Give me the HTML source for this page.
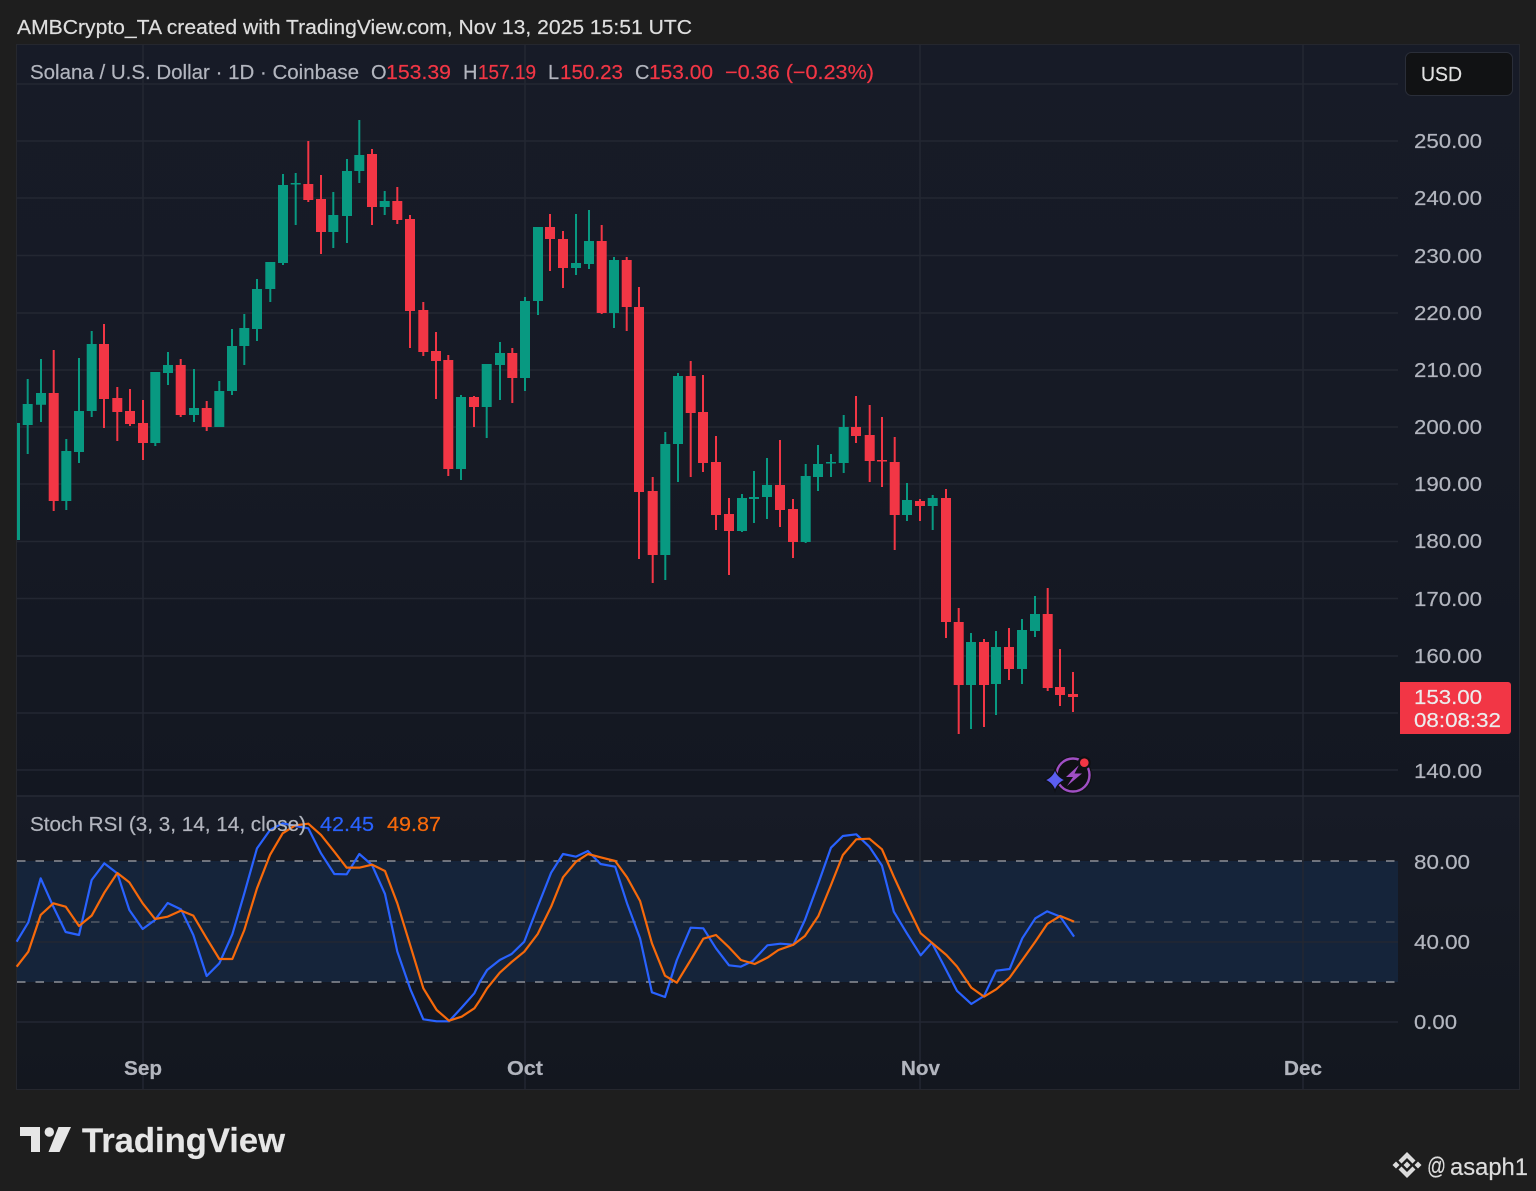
<!DOCTYPE html>
<html><head><meta charset="utf-8"><title>SOL chart</title>
<style>
html,body{margin:0;padding:0;background:#1e1e1e;width:1536px;height:1191px;overflow:hidden}
svg{display:block}
text{font-family:"Liberation Sans",sans-serif;stroke:currentColor;stroke-width:.2px}
</style></head>
<body>
<svg width="1536" height="1191" viewBox="0 0 1536 1191" xmlns="http://www.w3.org/2000/svg">
<defs>
<linearGradient id="a" x1="0" y1="0" x2="0" y2="1"><stop offset="0" stop-color="#171b27"/><stop offset=".5" stop-color="#161a25"/><stop offset="1" stop-color="#131721"/></linearGradient>
<linearGradient id="b" x1="0" y1="0" x2="0" y2="1"><stop offset="0" stop-color="#171b26"/><stop offset="1" stop-color="#13171f"/></linearGradient>
</defs>
<rect width="1536" height="1191" fill="#1e1e1e"/>
<rect x="17" y="45" width="1502" height="751" fill="url(#a)"/>
<rect x="17" y="796" width="1502" height="293" fill="url(#b)"/>
<rect x="16.500" y="44.500" width="1503" height="1045" fill="none" stroke="#25272e" stroke-width="1"/>

<!-- band -->
<rect x="17" y="861" width="1381" height="121" fill="#15243a"/>

<!-- grid -->
<path d="M17 84H1398M17 141H1398M17 198H1398M17 255.500H1398M17 313H1398M17 370H1398M17 427H1398M17 484H1398M17 541.500H1398M17 598.500H1398M17 656H1398M17 713H1398M17 770H1398M17 942H1398M17 1022H1398M143 45V1089M525 45V1089M920 45V1089M1303 45V1089" stroke="#232732" stroke-width="1.500" fill="none"/>
<path d="M17 796H1519" stroke="#262a35" stroke-width="1.500"/>

<path d="M17 861H1398M17 982H1398" stroke="#8d9097" stroke-width="1.500" stroke-dasharray="8.500 10"/>
<path d="M17 922H1398" stroke="#5f646d" stroke-width="1.200" stroke-dasharray="8.500 10"/>

<!-- green wicks -->
<path fill="none" stroke="#089981" stroke-width="2" d="M27.700 379V454M41 359V422M66.300 439V510M79 358V463M91.700 331V417M155.300 372V446M168 352V385M194 369V422M219.300 381V427M232 329V395M244.300 314V365M257 279V341M270.300 262V302M283 174V265M295.700 173V225M333.300 192V248M347 159V243M359.300 120V183M384.700 191V215M461 395V480M486.700 364V438M500 342V400M525 297V391M538 227V315M576 214V275M589 210V269M614 257V328M665.300 432V580M678 373V482M742 494V532M754 471V523M767 458V519M805.700 464V543M818 445V491M831 454V477M843.700 415V473M907 483V521M932.700 495V530M971 633V729M996 631V715M1022 619V684M1035 596V637"/>
<!-- green bodies -->
<path fill="none" stroke="#089981" stroke-width="10" d="M27.700 404V425M41 393V404.700M66.300 451V501M79 411V452M91.700 344V411M155.300 372V443M168 365V373M194 408V415M219.300 391V427M232 346V391M244.300 328V346M257 289V329M270.300 262V289M283 185V263M333.300 215V232M347 171V216M359.300 155V171M384.700 201V207M461 397V469M486.700 364V407M500 353V365M525 301V378M538 227V301M576 263V268M589 241V264M614 260V313M665.300 444V555M678 376V444M742 498V531M767 485V497M805.700 476V542M818 464V477M843.700 427V463M907 500V515M932.700 498V506M971 642V685M996 647V684M1022 630V669M1035 614V631"/>
<path fill="none" stroke="#089981" stroke-width="10" d="M295.700 183V184.500M754 497V499M831 462V463.500"/>
<path fill="none" stroke="#089981" stroke-width="3" d="M18.500 423V540"/>

<!-- red wicks -->
<path fill="none" stroke="#f23645" stroke-width="2" d="M53.700 350V511M104 324V428M117.300 387V441M130 389V426M143 400V460M180.700 359V417M206.700 401V431M308.300 141V202M321 175V254M372 149V225M397.300 187V224M410 215V348M423.300 302V356M436 332V399M448.300 355V476M474 396V427M512.300 348V403M550 214V271M563 231V288M601.700 225V314M626.700 257V331M639 287V559M652.700 477V583M690.700 361V477M703 375V472M716 436V530M729 498V575M780 440V527M793 499V558M856 396V443M869.700 405V482M882 417V487M894.700 437V550M920 499V521M946 489V638M958.700 608V734M984 639V727M1009 628V680M1047.700 588V691M1060 649V706M1073 672V712"/>
<!-- red bodies -->
<path fill="none" stroke="#f23645" stroke-width="10" d="M53.700 393V501M104 344V399M117.300 398V412M130 411V424M143 423V443M180.700 365V415M206.700 408V427M308.300 184V200M321 199V232M372 154V207M397.300 201V220M410 219V311M423.300 310V352M436 351V361M448.300 360V469M474 397V407M512.300 353V378M550 227V239M563 239V268M601.700 241V313M626.700 260V307M639 307V492M652.700 491V555M690.700 376V413M703 412V463M716 462V515M729 514V531M780 485V510M793 509V542M856 427V436M869.700 435V461M894.700 462V515M920 501V506M946 498V622M958.700 622V685M984 642V685M1009 647V669M1047.700 614V688M1060 687V695M1073 694V697M882 460V461.500"/>

<!-- stoch rsi left part -->
<g transform="scale(.33333)" fill="none" stroke-linejoin="round">
<g transform="translate(0,2400)">
<polyline vector-effect="non-scaling-stroke" stroke="#2962ff" stroke-width="2.200" points="50,425 85,367 122,235 160,320 197,396 237,405 275,240 313,190 352,220 388,330 428,387 465,360 503,309 543,328 580,405 620,528 658,490 697,403 733,280 771,145 810,90 848,70 886,78 925,85 963,160 1003,222 1040,223 1078,162 1116,195 1155,282 1192,455 1232,570 1270,658 1310,664 1347,664 1385,623 1423,580 1440,545"/>
<polyline vector-effect="non-scaling-stroke" stroke="#f7690a" stroke-width="2.200" points="50,500 85,455 122,345 160,310 197,320 237,378 275,347 313,278 352,219 388,247 428,310 465,357 503,350 543,332 580,347 620,415 658,477 697,477 733,390 771,265 810,165 848,100 886,76 925,71 963,105 1003,155 1040,203 1078,203 1116,194 1155,213 1192,310 1232,440 1270,565 1310,630 1347,662 1385,650 1423,625 1440,600"/>
</g></g>
<!-- stoch rsi right part -->
<g transform="translate(480,800) scale(.39526,.33333)" fill="none" stroke-linejoin="round">
<polyline vector-effect="non-scaling-stroke" stroke="#2962ff" stroke-width="2.200" points="0,545 18,510 50,480 80,462 112,425 146,320 180,218 210,162 243,170 273,153 305,192 342,200 372,310 405,415 435,577 468,591 498,480 533,383 565,385 597,445 630,496 660,500 690,483 727,436 760,431 793,434 822,360 856,250 888,143 918,108 952,103 985,140 1017,197 1047,335 1080,400 1115,466 1143,428 1175,500 1207,573 1243,612 1275,588 1306,512 1340,507 1372,415 1405,355 1435,334 1468,350 1503,410"/>
<polyline vector-effect="non-scaling-stroke" stroke="#f7690a" stroke-width="2.200" points="0,600 18,565 50,518 80,486 112,455 146,402 180,320 210,232 243,185 273,162 305,172 342,183 372,232 405,303 435,430 468,527 498,548 533,480 565,416 597,405 630,442 660,480 695,492 727,473 755,450 793,434 822,408 856,348 888,255 918,165 952,118 985,116 1017,148 1047,230 1080,315 1115,400 1143,428 1180,465 1207,500 1243,563 1275,590 1306,568 1340,533 1372,480 1405,425 1435,372 1468,348 1503,365"/>
</g>

<!-- purple icon -->
<circle cx="1073" cy="775" r="19" fill="#0f1014"/>
<circle cx="1073" cy="775" r="16.500" fill="none" stroke="#a04fc4" stroke-width="2.400"/>
<path d="M1079 765L1066 777H1073L1067 786L1082 773.500H1074.500Z" fill="#a04fc4"/>
<circle cx="1084.300" cy="762.700" r="6.500" fill="#0f1014"/>
<circle cx="1084.300" cy="762.700" r="4.300" fill="#f23645"/>
<path d="M1055 769Q1057 776.500 1065 780Q1057 783.500 1055 791Q1053 783.500 1045 780Q1053 776.500 1055 769Z" fill="#5b5ef0" stroke="#0f1014" stroke-width="1.200"/>

<!-- header -->
<text x="17" y="34" font-size="20" fill="#dedede" color="#dedede" textLength="675" lengthAdjust="spacingAndGlyphs">AMBCrypto_TA created with TradingView.com, Nov 13, 2025 15:51 UTC</text>

<!-- legend -->
<g font-size="20" fill="#b2b5be" color="#b2b5be">
<text x="30" y="79" textLength="329" lengthAdjust="spacingAndGlyphs">Solana / U.S. Dollar · 1D · Coinbase</text>
<text x="371" y="79">O</text><text x="463" y="79">H</text><text x="548" y="79">L</text><text x="635" y="79">C</text>
<text x="30" y="831" textLength="276" lengthAdjust="spacingAndGlyphs">Stoch RSI (3, 3, 14, 14, close)</text>
</g>
<g font-size="20" fill="#f23645" color="#f23645">
<text x="386" y="79" textLength="65" lengthAdjust="spacingAndGlyphs">153.39</text>
<text x="478" y="79" textLength="58" lengthAdjust="spacingAndGlyphs">157.19</text>
<text x="560" y="79" textLength="63" lengthAdjust="spacingAndGlyphs">150.23</text>
<text x="649" y="79" textLength="64" lengthAdjust="spacingAndGlyphs">153.00</text>
<text x="725" y="79" textLength="149" lengthAdjust="spacingAndGlyphs">−0.36 (−0.23%)</text>
</g>
<text x="320" y="831" font-size="20" fill="#2962ff" color="#2962ff" textLength="54" lengthAdjust="spacingAndGlyphs">42.45</text>
<text x="387" y="831" font-size="20" fill="#f7690a" color="#f7690a" textLength="54" lengthAdjust="spacingAndGlyphs">49.87</text>

<!-- USD -->
<rect x="1405.500" y="52.500" width="107" height="43" rx="6" fill="#111214" stroke="#2a2e39"/>
<text x="1421" y="81" font-size="20" fill="#e0e0e0" color="#e0e0e0" textLength="41" lengthAdjust="spacingAndGlyphs">USD</text>

<!-- axis labels -->
<g font-size="20.500" fill="#b2b5be" color="#b2b5be">
<text x="1414" y="148" textLength="68" lengthAdjust="spacingAndGlyphs">250.00</text>
<text x="1414" y="205" textLength="68" lengthAdjust="spacingAndGlyphs">240.00</text>
<text x="1414" y="263" textLength="68" lengthAdjust="spacingAndGlyphs">230.00</text>
<text x="1414" y="320" textLength="68" lengthAdjust="spacingAndGlyphs">220.00</text>
<text x="1414" y="377" textLength="68" lengthAdjust="spacingAndGlyphs">210.00</text>
<text x="1414" y="434" textLength="68" lengthAdjust="spacingAndGlyphs">200.00</text>
<text x="1414" y="491" textLength="68" lengthAdjust="spacingAndGlyphs">190.00</text>
<text x="1414" y="548" textLength="68" lengthAdjust="spacingAndGlyphs">180.00</text>
<text x="1414" y="606" textLength="68" lengthAdjust="spacingAndGlyphs">170.00</text>
<text x="1414" y="663" textLength="68" lengthAdjust="spacingAndGlyphs">160.00</text>
<text x="1414" y="778" textLength="68" lengthAdjust="spacingAndGlyphs">140.00</text>
<text x="1414" y="869" textLength="56" lengthAdjust="spacingAndGlyphs">80.00</text>
<text x="1414" y="949" textLength="56" lengthAdjust="spacingAndGlyphs">40.00</text>
<text x="1414" y="1029" textLength="43" lengthAdjust="spacingAndGlyphs">0.00</text>
</g>

<!-- price tag -->
<path d="M1400 682H1508a3 3 0 0 1 3 3V731a3 3 0 0 1-3 3H1400Z" fill="#f23645"/>
<text x="1414" y="704" font-size="20.500" fill="#ececec" color="#ececec" textLength="68" lengthAdjust="spacingAndGlyphs">153.00</text>
<text x="1414" y="727" font-size="20.500" fill="#ececec" color="#ececec" textLength="87" lengthAdjust="spacingAndGlyphs">08:08:32</text>

<!-- time labels -->
<g font-size="20" font-weight="bold" fill="#b2b5be" color="#b2b5be">
<text x="124" y="1075" textLength="38" lengthAdjust="spacingAndGlyphs">Sep</text>
<text x="507" y="1075" textLength="36" lengthAdjust="spacingAndGlyphs">Oct</text>
<text x="901" y="1075" textLength="39" lengthAdjust="spacingAndGlyphs">Nov</text>
<text x="1284" y="1075" textLength="38" lengthAdjust="spacingAndGlyphs">Dec</text>
</g>

<!-- TradingView logo -->
<path d="M20 1127H40V1152H31V1136H20Z" fill="#e6e6e6"/>
<circle cx="49.300" cy="1132" r="4.700" fill="#e6e6e6"/>
<path d="M58.500 1127H71L59.500 1152H48.500Z" fill="#e6e6e6"/>
<text x="82" y="1152" font-size="34" font-weight="bold" fill="#e6e6e6" color="#e6e6e6" textLength="203" lengthAdjust="spacingAndGlyphs">TradingView</text>

<!-- watermark -->
<g fill="#dcdcdc">
<path d="M1407 1152l8.500 8.500-3 3-5.500-5.500-5.500 5.500-3-3zM1407 1178l8.500-8.500-3-3-5.500 5.500-5.500-5.500-3 3zM1407 1161.500l3.500 3.500-3.500 3.500-3.500-3.500zM1396 1161.500l3.500 3.500-3.500 3.500-3.500-3.500zM1418 1161.500l3.500 3.500-3.500 3.500-3.500-3.500z"/>
</g>
<text x="1427" y="1174" font-size="24" fill="#dcdcdc" color="#dcdcdc" textLength="19" lengthAdjust="spacingAndGlyphs">@</text>
<text x="1450" y="1175" font-size="24" fill="#dcdcdc" color="#dcdcdc" textLength="78" lengthAdjust="spacingAndGlyphs">asaph1</text>
</svg>
</body></html>
